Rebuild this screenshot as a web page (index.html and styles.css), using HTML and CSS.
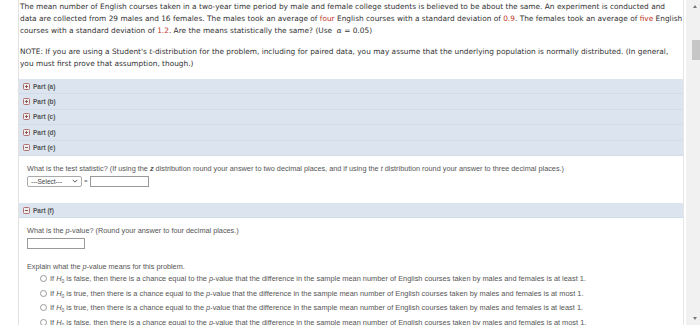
FILE: index.html
```html
<!DOCTYPE html>
<html lang="en">
<head>
    <meta charset="UTF-8">
    <title>Problem</title>
    <link rel="stylesheet" href="styles.css">
</head>
<body>
    <div class="page">
        <div class="content">
            <p class="intro">The mean number of English courses taken in a two-year time period by male and female college students is believed to be about the same. An experiment is conducted and data are collected from 29 males and 16 females. The males took an average of <span class="red">four</span> English courses with a standard deviation of <span class="red">0.9</span>. The females took an average of <span class="red">five</span> English courses with a standard deviation of <span class="red">1.2</span>. Are the means statistically the same? (Use &nbsp;<i>α</i> = 0.05)</p>
            <p class="intro note">NOTE: If you are using a Student's <i>t</i>-distribution for the problem, including for paired data, you may assume that the underlying population is normally distributed. (In general, you must first prove that assumption, though.)</p>

            <div class="part">
                <svg class="tog" viewBox="0 0 7 7"><rect x=".5" y=".5" width="6" height="6" rx="1"/><path d="M2 3.5h3M3.5 2v3"/></svg>Part (a)
            </div>
            <div class="part">
                <svg class="tog" viewBox="0 0 7 7"><rect x=".5" y=".5" width="6" height="6" rx="1"/><path d="M2 3.5h3M3.5 2v3"/></svg>Part (b)
            </div>
            <div class="part">
                <svg class="tog" viewBox="0 0 7 7"><rect x=".5" y=".5" width="6" height="6" rx="1"/><path d="M2 3.5h3M3.5 2v3"/></svg>Part (c)
            </div>
            <div class="part">
                <svg class="tog" viewBox="0 0 7 7"><rect x=".5" y=".5" width="6" height="6" rx="1"/><path d="M2 3.5h3M3.5 2v3"/></svg>Part (d)
            </div>
            <div class="part">
                <svg class="tog" viewBox="0 0 7 7"><rect x=".5" y=".5" width="6" height="6" rx="1"/><path d="M2 3.5h3"/></svg>Part (e)
            </div>
            <div class="body body-e">
                <div class="q">What is the test statistic? (If using the <i><b>z</b></i> distribution round your answer to two decimal places, and if using the <i>t</i> distribution round your answer to three decimal places.)</div>
                <div class="answer">
                    <span class="select">---Select--- <svg viewBox="0 0 8 5"><path d="M1 1l3 3 3-3"/></svg></span>
                    <span class="eq">=</span>
                    <span class="box wide"></span>
                </div>
            </div>
            <div class="part">
                <svg class="tog" viewBox="0 0 7 7"><rect x=".5" y=".5" width="6" height="6" rx="1"/><path d="M2 3.5h3"/></svg>Part (f)
            </div>
            <div class="body">
                <div class="q">What is the <i>p</i>-value? (Round your answer to four decimal places.)</div>
                <span class="box"></span>
                <div class="q explain">Explain what the <i>p</i>-value means for this problem.</div>
                <ul class="opts">
                    <li><span class="radio"></span>If <i>H</i><sub>0</sub> is false, then there is a chance equal to the <i>p</i>-value that the difference in the sample mean number of English courses taken by males and females is at least 1.</li>
                    <li><span class="radio"></span>If <i>H</i><sub>0</sub> is true, then there is a chance equal to the <i>p</i>-value that the difference in the sample mean number of English courses taken by males and females is at most 1.</li>
                    <li><span class="radio"></span>If <i>H</i><sub>0</sub> is true, then there is a chance equal to the <i>p</i>-value that the difference in the sample mean number of English courses taken by males and females is at least 1.</li>
                    <li><span class="radio"></span>If <i>H</i><sub>0</sub> is false, then there is a chance equal to the <i>p</i>-value that the difference in the sample mean number of English courses taken by males and females is at most 1.</li>
                </ul>
            </div>
        </div>
        <div class="scrollbar">
            <span class="arrow up"></span>
            <span class="thumb"></span>
            <span class="arrow down"></span>
        </div>
    </div>
</body>
</html>
```

FILE: styles.css
```css
html{
    box-sizing: border-box;
}
*, *::before, *::after{
    box-sizing: inherit;
}
body{
    margin: 0;
    background: #fff;
    height: 325px;
    overflow: hidden;
}
.page{
    display: flex;
    height: 325px;
}
.content{
    margin-left: 18px;
    width: 666px;
    border-left: 1px solid #e2e2e2;
    border-right: 1px solid #e6e6e6;
    overflow: hidden;
}
.intro{
    margin: 1px 0 0;
    padding-left: 1px;
    font-family: "DejaVu Sans", Verdana, sans-serif;
    font-size: 7.4px;
    line-height: 12px;
    color: #333;
}
.intro i{
    font-family: "DejaVu Serif", serif;
}
.note{
    margin-top: 9px;
    margin-bottom: 9px;
}
.red{
    color: #c0392b;
}
.part{
    height: 15.4px;
    display: flex;
    align-items: center;
    padding-left: 4px;
    background: #dce5ef;
    border-bottom: 1px solid #d3dde9;
    font-family: "Liberation Sans", Arial, sans-serif;
    font-size: 6.5px;
    font-weight: bold;
    color: #555;
}
.tog{
    width: 7px;
    height: 7px;
    margin-right: 3px;
    fill: #eee;
    stroke: #b07070;
    stroke-width: 1;
}
.tog path{
    stroke: #8a5a5a;
}
.body{
    padding: 8px 0 0 8px;
    font-family: "Liberation Sans", Arial, sans-serif;
    font-size: 7.3px;
    color: #555;
}
.body-e{
    height: 47px;
}
.q{
    line-height: 10px;
}
.answer{
    display: flex;
    align-items: center;
    margin-top: 2px;
}
.select{
    display: inline-flex;
    align-items: center;
    justify-content: space-between;
    width: 55px;
    height: 11px;
    padding: 0 3px;
    border: 1px solid #aaa;
    border-radius: 2px;
    font-size: 6.5px;
    color: #444;
}
.select svg{
    width: 6px;
    height: 4px;
    fill: none;
    stroke: #444;
    stroke-width: 1.2;
}
.eq{
    margin: 0 2px;
    font-size: 6px;
}
.box{
    display: block;
    width: 58px;
    height: 11px;
    margin-top: 2px;
    border: 1px solid #999;
}
.box.wide{
    width: 59px;
    margin-top: 0;
}
.explain{
    margin-top: 13px;
}
.opts{
    list-style: none;
    margin: 0;
    padding: 0 0 0 13px;
    font-size: 7.4px;
}
.opts li{
    line-height: 14.5px;
    white-space: nowrap;
}
.opts sub{
    font-size: 5px;
    line-height: 0;
}
.radio{
    display: inline-block;
    vertical-align: -1px;
    width: 7px;
    height: 7px;
    margin-right: 3px;
    border: 1px solid #999;
    border-radius: 50%;
}
.scrollbar{
    margin-left: 2px;
    width: 14px;
    background: #f1f1f1;
    position: relative;
}
.thumb{
    position: absolute;
    left: 6px;
    top: 40px;
    width: 8px;
    height: 20px;
    background: #c6c6c6;
}
.arrow{
    position: absolute;
    left: 7px;
    width: 0;
    height: 0;
    border-left: 2px solid transparent;
    border-right: 2px solid transparent;
}
.arrow.up{
    top: 5px;
    border-bottom: 3px solid #777;
}
.arrow.down{
    bottom: 5px;
    border-top: 3px solid #777;
}
```
